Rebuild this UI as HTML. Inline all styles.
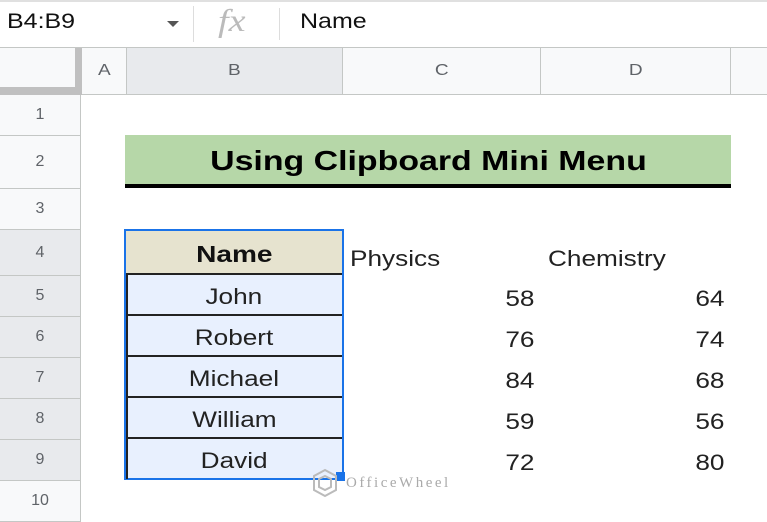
<!DOCTYPE html><html><head><style>
body{margin:0;width:767px;height:522px;overflow:hidden;background:#fff;font-family:"Liberation Sans",Arial,sans-serif;position:relative}
.a{position:absolute;box-sizing:border-box}
.x{display:inline-block;transform:scaleX(1.19)}
.l{transform-origin:left center}
.r{transform-origin:right center}
.rh{position:absolute;left:0;width:81px;background:#f8f9fa;border-bottom:1px solid #c4c7c5;border-right:1px solid #c4c7c5;color:#5f6368;font-size:16px;text-align:center;box-sizing:border-box}
.rh.s{background:#e8eaed}
.ch{position:absolute;top:48px;height:47px;background:#f8f9fa;border-right:1px solid #c4c7c5;border-bottom:1px solid #c4c7c5;color:#5f6368;font-size:16px;text-align:center;line-height:46px;box-sizing:border-box}
.n{position:absolute;left:126px;width:216px;background:#e8f0fe;border-bottom:2px solid #222;text-align:center;font-size:22px;color:#222;box-sizing:border-box}
.v{position:absolute;font-size:22px;color:#222;text-align:right}
</style></head><body>
<div class="a" style="left:0;top:0;width:767px;height:48px;border-bottom:1px solid #c4c7c5;border-top:2px solid #e0e0e0"></div>
<div class="a" style="left:7px;top:10px;font-size:21px;color:#111"><span class="x l">B4:B9</span></div>
<div class="a" style="left:167px;top:21px;width:0;height:0;border-left:6px solid transparent;border-right:6px solid transparent;border-top:6px solid #555"></div>
<div class="a" style="left:193px;top:6px;width:1px;height:36px;background:#ddd"></div>
<div class="a" style="left:218px;top:2px;font-size:32px;color:#bbb;font-family:'Liberation Serif',serif;font-style:italic"><span class="x l">fx</span></div>
<div class="a" style="left:279px;top:8px;width:1px;height:32px;background:#ddd"></div>
<div class="a" style="left:300px;top:10px;font-size:21px;color:#111"><span class="x l">Name</span></div>
<div class="a" style="left:0;top:48px;width:82px;height:47px;background:#f8f9fa;border-right:7px solid #c0c0c0;border-bottom:8px solid #c0c0c0"></div>
<div class="ch" style="left:82px;width:45px"><span class="x">A</span></div>
<div class="ch" style="left:127px;width:216px;background:#e8eaed"><span class="x">B</span></div>
<div class="ch" style="left:343px;width:198px"><span class="x">C</span></div>
<div class="ch" style="left:541px;width:190px"><span class="x">D</span></div>
<div class="ch" style="left:731px;width:40px"></div>
<div class="rh" style="top:95px;height:41px;line-height:40px">1</div>
<div class="rh" style="top:136px;height:53px;line-height:52px">2</div>
<div class="rh" style="top:189px;height:41px;line-height:40px">3</div>
<div class="rh s" style="top:230px;height:46px;line-height:45px">4</div>
<div class="rh s" style="top:276px;height:41px;line-height:40px">5</div>
<div class="rh s" style="top:317px;height:41px;line-height:40px">6</div>
<div class="rh s" style="top:358px;height:41px;line-height:40px">7</div>
<div class="rh s" style="top:399px;height:41px;line-height:40px">8</div>
<div class="rh s" style="top:440px;height:41px;line-height:40px">9</div>
<div class="rh" style="top:481px;height:41px;line-height:40px">10</div>
<div class="a" style="left:125px;top:135px;width:606px;height:53px;background:#b6d7a8;border-bottom:4px solid #000;text-align:center;font-weight:bold;font-size:28px;line-height:52px;color:#000"><span class="x" style="transform:scaleX(1.21)">Using Clipboard Mini Menu</span></div>
<div class="a" style="left:126px;top:231px;width:216px;height:44px;background:#e6e3cf;border-bottom:2px solid #222;text-align:center;font-weight:bold;font-size:23px;line-height:46px;color:#111"><span class="x" style="transform:scaleX(1.22)">Name</span></div>
<div class="n" style="top:275px;height:41px;line-height:44px"><span class="x">John</span></div>
<div class="n" style="top:316px;height:41px;line-height:44px"><span class="x">Robert</span></div>
<div class="n" style="top:357px;height:41px;line-height:44px"><span class="x">Michael</span></div>
<div class="n" style="top:398px;height:41px;line-height:44px"><span class="x">William</span></div>
<div class="n" style="top:439px;height:41px;line-height:44px;border-bottom:none"><span class="x">David</span></div>
<div class="a" style="left:124px;top:229px;width:220px;height:251px;border:2px solid #1a73e8"></div>
<div class="a" style="left:126px;top:275px;width:2px;height:204px;background:#222"></div>
<div class="a" style="left:336px;top:472px;width:9px;height:9px;background:#1a73e8"></div>
<div class="a" style="left:350px;top:246px;font-size:22px;color:#222"><span class="x l">Physics</span></div>
<div class="a" style="left:548px;top:246px;font-size:22px;color:#222"><span class="x l">Chemistry</span></div>
<div class="v" style="left:470px;width:64px;top:286px"><span class="x r">58</span></div><div class="v" style="left:660px;width:64px;top:286px"><span class="x r">64</span></div>
<div class="v" style="left:470px;width:64px;top:327px"><span class="x r">76</span></div><div class="v" style="left:660px;width:64px;top:327px"><span class="x r">74</span></div>
<div class="v" style="left:470px;width:64px;top:368px"><span class="x r">84</span></div><div class="v" style="left:660px;width:64px;top:368px"><span class="x r">68</span></div>
<div class="v" style="left:470px;width:64px;top:409px"><span class="x r">59</span></div><div class="v" style="left:660px;width:64px;top:409px"><span class="x r">56</span></div>
<div class="v" style="left:470px;width:64px;top:450px"><span class="x r">72</span></div><div class="v" style="left:660px;width:64px;top:450px"><span class="x r">80</span></div>
<svg class="a" style="left:312px;top:468px" width="26" height="30" viewBox="0 0 26 30"><path d="M13 2 L24 8 L24 22 L13 28 L2 22 L2 8 Z M13 8 L19 11 L19 19 L13 22 L7 19 L7 11 Z" fill="none" stroke="#bbb" stroke-width="2"/></svg>
<div class="a" style="left:346px;top:475px;font-size:15px;letter-spacing:2.5px;color:#aaa;font-family:'Liberation Serif',serif">OfficeWheel</div>
</body></html>
